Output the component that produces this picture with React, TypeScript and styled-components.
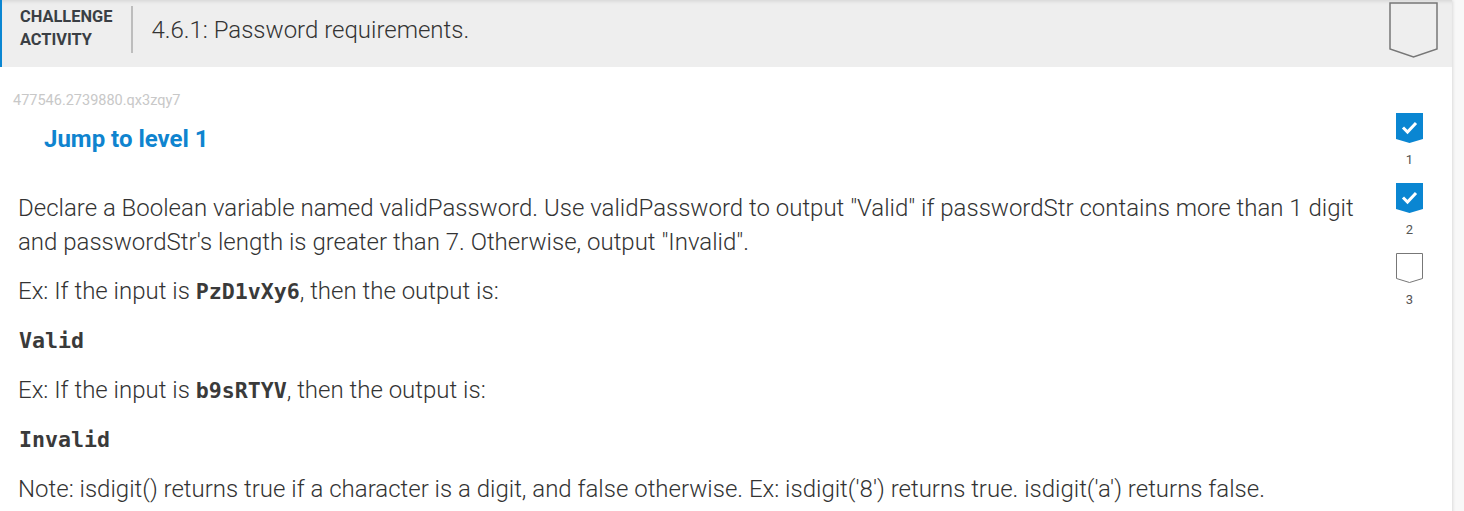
import React from 'react';
import styled, {createGlobalStyle} from 'styled-components';

const GlobalStyle = createGlobalStyle`
  body {
    margin: 0;
    background: #f8f8f8;
    font-family: Roboto, "Liberation Sans", sans-serif;
    color: #333;
  }
`

interface LevelProps{
  num:number;
  done:boolean;
}

const Level:React.FC<LevelProps>=({num, done})=>(
  <LevelItem>
    {done ?
      <svg width="27" height="30" viewBox="0 0 27 30">
        <path d="M0 0H27V26L13.5 30L0 26Z" fill="#0a86d2"/>
        <path d="M7 14.5L11.5 19L20 10" stroke="#fff" strokeWidth="3" fill="none"/>
      </svg> :
      <svg width="27" height="30" viewBox="0 0 27 30">
        <path d="M0.5 0.5H26.5V25.5L13.5 29.5L0.5 25.5Z" stroke="#777" strokeWidth="1" fill="#fff"/>
      </svg>
    }
    <LevelNum>{num}</LevelNum>
  </LevelItem>
)

const App=()=> {
  return (
    <>
      <GlobalStyle/>
      <Card>
        <Header>
          <Kind>CHALLENGE<br/>ACTIVITY</Kind>
          <Divider/>
          <Title>4.6.1: Password requirements.</Title>
          <Badge>
            <svg width="50" height="56" viewBox="0 0 50 56">
              <path d="M1 1H48V47L24.5 55L1 47Z" stroke="#777" strokeWidth="1.5" fill="none"/>
            </svg>
          </Badge>
        </Header>
        <Body>
          <Content>
            <Ident>477546.2739880.qx3zqy7</Ident>
            <Jump>Jump to level 1</Jump>
            <Para>
              Declare a Boolean variable named validPassword. Use validPassword to output "Valid" if passwordStr contains more than 1 digit and passwordStr's length is greater than 7. Otherwise, output "Invalid".
            </Para>
            <Para>Ex: If the input is <Code>PzD1vXy6</Code>, then the output is:</Para>
            <Output>Valid</Output>
            <Para>Ex: If the input is <Code>b9sRTYV</Code>, then the output is:</Para>
            <Output>Invalid</Output>
            <Para>Note: isdigit() returns true if a character is a digit, and false otherwise. Ex: isdigit('8') returns true. isdigit('a') returns false.</Para>
          </Content>
          <Rail>
            <Level num={1} done={true}/>
            <Level num={2} done={true}/>
            <Level num={3} done={false}/>
          </Rail>
        </Body>
      </Card>
    </>
  );
}

export default App;

const Card=styled.div`
  width: 1452px;
  background: #fff;
  box-shadow: 1px 0 3px rgba(0,0,0,0.12);
  min-height: 511px;
`
const Header=styled.div`
  display: flex;
  align-items: flex-start;
  height: 67px;
  box-sizing: border-box;
  background: #eeeeee;
  border-left: 2px solid #0a86d2;
  box-shadow: inset 0 4px 4px -3px rgba(0,0,0,0.12);
`
const Kind=styled.div`
  margin: 5px 0 0 18px;
  font-size: 16.4px;
  font-weight: 700;
  line-height: 23px;
  color: #3a3f44;
`
const Divider=styled.div`
  width: 2px;
  height: 47px;
  margin: 6px 0 0 19px;
  background: #bdbdbd;
`
const Title=styled.div`
  flex: 1;
  margin: 14px 0 0 18px;
  font-size: 24px;
  font-weight: 300;
  line-height: 32px;
  color: #333;
`
const Badge=styled.div`
  margin: 2px 13px 0 0;
  line-height: 0;
`
const Body=styled.div`
  display: flex;
`
const Content=styled.div`
  flex: 1;
  padding-right: 20px;
`
const Ident=styled.div`
  margin: 26px 0 0 13px;
  font-size: 14.5px;
  line-height: 16px;
  color: #c8c8c8;
`
const Jump=styled.div`
  margin: 15px 0 0 44px;
  font-size: 24px;
  font-weight: 700;
  line-height: 30px;
  color: #0f84cf;
`
const Para=styled.p`
  margin: 0 0 15px 18px;
  font-size: 24px;
  font-weight: 300;
  line-height: 34px;
  color: #333;
  &:first-of-type{
    margin-top: 37px;
  }
`
const Code=styled.code`
  font-family: "DejaVu Sans Mono", monospace;
  font-size: 21.6px;
  font-weight: 700;
  color: #3a3a3a;
`
const Output=styled.pre`
  margin: 0 0 15px 19px;
  font-family: "DejaVu Sans Mono", monospace;
  font-size: 21.6px;
  font-weight: 700;
  line-height: 34px;
  color: #3a3a3a;
`
const Rail=styled.div`
  display: flex;
  flex-direction: column;
  align-items: center;
  width: 27px;
  margin: 46px 29px 0 0;
`
const LevelItem=styled.div`
  display: flex;
  flex-direction: column;
  align-items: center;
  height: 70px;
  svg{ display: block; }
`
const LevelNum=styled.div`
  margin-top: 9px;
  font-size: 13px;
  line-height: 16px;
  color: #555;
`
